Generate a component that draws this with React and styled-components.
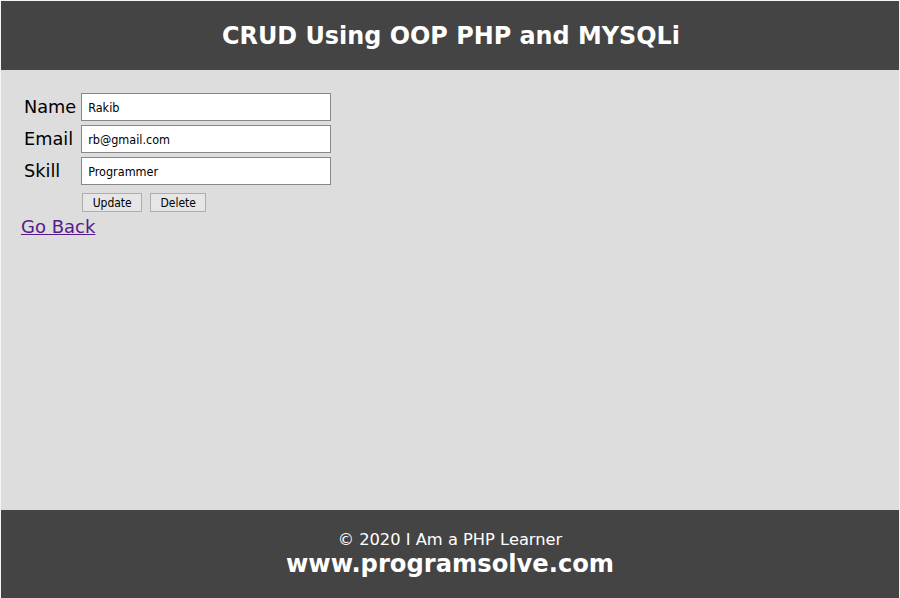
import React from "react";
import styled, { createGlobalStyle } from "styled-components";

const Global = createGlobalStyle`
  html, body { margin: 0; padding: 0; background: #fff; }
  body { font-family: "DejaVu Sans", Verdana, sans-serif; }
`;

const Page = styled.div`
  width: 898px;
  height: 597px;
  border: 1px solid #f4f4f4;
  border-bottom: none;
  display: flex;
  flex-direction: column;
  overflow: hidden;
`;

const Header = styled.header`
  height: 69px;
  background: #444444;
  display: flex;
  align-items: center;
  justify-content: center;
  flex-shrink: 0;
`;

const Title = styled.h1`
  margin: 0;
  color: #fff;
  font-family: "DejaVu Sans", Verdana, sans-serif;
  font-weight: bold;
  font-size: 23.9px;
  padding-top: 1px;
  padding-left: 2px;
`;

const Main = styled.main`
  flex: 1;
  background: #dddddd;
  padding: 20px 20px 0 19px;
`;

const FormTable = styled.table`
  border-spacing: 2px;
  border-collapse: separate;
`;

const Label = styled.td`
  font-size: 17.7px;
  color: #000;
  padding: 1px 3px 1px 2px;
  vertical-align: middle;
`;

const Cell = styled.td`
  padding: 1px 0;
`;

const Input = styled.input`
  width: 250px;
  height: 28px;
  box-sizing: border-box;
  border: 1px solid #888;
  background: #fff;
  font-family: "DejaVu Sans Condensed", Tahoma, sans-serif;
  font-size: 12.5px;
  padding: 0 6px;
  color: #000;
  outline: none;
`;

const Buttons = styled.div`
  display: flex;
  gap: 8px;
  padding: 4px 0 0 1px;
`;

const Button = styled.button`
  height: 19px;
  width: ${(p) => p.w}px;
  box-sizing: border-box;
  border: 1px solid #adadad;
  background: #e6e6e6;
  font-family: "DejaVu Sans Condensed", Tahoma, sans-serif;
  font-size: 12px;
  color: #000;
  padding: 0;
`;

const BackLink = styled.a`
  display: inline-block;
  margin-top: 1px;
  margin-left: 1px;
  font-size: 18px;
  color: #551a8b;
  text-decoration: underline;
`;

const Footer = styled.footer`
  height: 88px;
  background: #444444;
  flex-shrink: 0;
  display: flex;
  flex-direction: column;
  align-items: center;
  padding-top: 20px;
  box-sizing: border-box;
  color: #fff;
`;

const Copy = styled.div`
  font-size: 16.3px;
  line-height: 20px;
`;

const Site = styled.div`
  font-size: 24.2px;
  font-weight: bold;
  line-height: 28px;
`;

export default function App() {
  return (
    <>
      <Global />
      <Page>
        <Header>
          <Title>CRUD Using OOP PHP and MYSQLi</Title>
        </Header>
        <Main>
          <form onSubmit={(e) => e.preventDefault()}>
            <FormTable>
              <tbody>
                <tr>
                  <Label>Name</Label>
                  <Cell><Input defaultValue="Rakib" /></Cell>
                </tr>
                <tr>
                  <Label>Email</Label>
                  <Cell><Input defaultValue="rb@gmail.com" /></Cell>
                </tr>
                <tr>
                  <Label>Skill</Label>
                  <Cell><Input defaultValue="Programmer" /></Cell>
                </tr>
                <tr>
                  <td></td>
                  <Cell>
                    <Buttons>
                      <Button w={60}>Update</Button>
                      <Button w={56}>Delete</Button>
                    </Buttons>
                  </Cell>
                </tr>
              </tbody>
            </FormTable>
          </form>
          <BackLink href="#">Go Back</BackLink>
        </Main>
        <Footer>
          <Copy>© 2020 I Am a PHP Learner</Copy>
          <Site>www.programsolve.com</Site>
        </Footer>
      </Page>
    </>
  );
}
